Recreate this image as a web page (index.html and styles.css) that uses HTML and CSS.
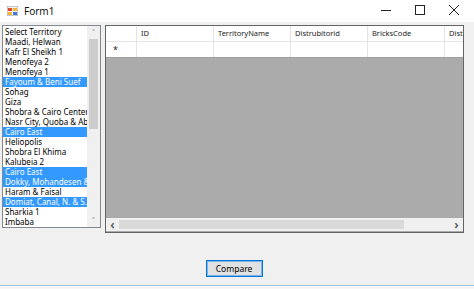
FILE: index.html
```html
<!DOCTYPE html>
<html lang="en">
<head>
    <meta charset="UTF-8">
    <title>Form1</title>
    <link rel="stylesheet" href="styles.css">
</head>
<body>
    <div class="window">
        <div class="titlebar">
            <svg class="app-icon" width="11" height="10" viewBox="0 0 11 10">
                <rect x="0" y="0" width="11" height="10" fill="#f4f4f4" stroke="#9a9a9a" stroke-width="1"/>
                <rect x="1" y="2" width="4" height="3" fill="#e8412c"/>
                <rect x="6" y="2" width="4" height="3" fill="#f7b52c"/>
                <rect x="1" y="6" width="4" height="3" fill="#f7b52c"/>
                <rect x="6" y="6" width="4" height="3" fill="#3b7ddd"/>
            </svg>
            <span class="title">Form1</span>
            <div class="controls">
                <svg class="ctl" width="34" height="22" viewBox="0 0 34 22"><line x1="12" y1="10.5" x2="22" y2="10.5" stroke="#222" stroke-width="1"/></svg>
                <svg class="ctl" width="34" height="22" viewBox="0 0 34 22"><rect x="12.5" y="5.5" width="9" height="9" fill="none" stroke="#222" stroke-width="1"/></svg>
                <svg class="ctl" width="34" height="22" viewBox="0 0 34 22"><path d="M12 5 L22 15 M22 5 L12 15" stroke="#222" stroke-width="1"/></svg>
            </div>
        </div>

        <div class="client">
            <div class="listbox">
                <ul class="items">
                    <li>Select Territory</li>
                    <li>Maadi, Helwan</li>
                    <li>Kafr El Sheikh 1</li>
                    <li>Menofeya 2</li>
                    <li>Menofeya 1</li>
                    <li class="sel">Fayoum &amp; Beni Suef</li>
                    <li>Sohag</li>
                    <li>Giza</li>
                    <li>Shobra &amp; Cairo Center</li>
                    <li>Nasr City, Quoba &amp; Ab</li>
                    <li class="sel">Cairo East</li>
                    <li>Heliopolis</li>
                    <li>Shobra El Khima</li>
                    <li>Kalubeia 2</li>
                    <li class="sel">Cairo East</li>
                    <li class="sel">Dokky, Mohandesen &amp;</li>
                    <li>Haram &amp; Faisal</li>
                    <li class="sel">Domiat, Canal, N. &amp; S.</li>
                    <li>Sharkia 1</li>
                    <li>Imbaba</li>
                </ul>
                <div class="vscroll">
                    <span class="arrow">&#708;</span>
                    <div class="vthumb"></div>
                    <div class="vtrack"></div>
                    <span class="arrow">&#709;</span>
                </div>
            </div>

            <div class="grid">
                <div class="grid-body">
                    <div class="row head">
                        <div class="cell rowhead"></div>
                        <div class="cell">ID</div>
                        <div class="cell">TerritoryName</div>
                        <div class="cell">Distrubitorid</div>
                        <div class="cell">BricksCode</div>
                        <div class="cell">Distr</div>
                    </div>
                    <div class="row newrow">
                        <div class="cell rowhead">*</div>
                        <div class="cell"></div>
                        <div class="cell"></div>
                        <div class="cell"></div>
                        <div class="cell"></div>
                        <div class="cell"></div>
                    </div>
                </div>
                <div class="hscroll">
                    <span class="arrow">&lsaquo;</span>
                    <div class="hthumb"></div>
                    <div class="htrack"></div>
                    <span class="arrow">&rsaquo;</span>
                </div>
            </div>
        </div>

        <div class="footer">
            <button class="btn">Compare</button>
        </div>
        <div class="bottom-edge"></div>
    </div>
</body>
</html>
```

FILE: styles.css
```css
body {
    margin: 0;
    padding: 0;
    font-family: "Noto Sans", "DejaVu Sans", sans-serif;
    color: #000;
}

.window {
    width: 474px;
    height: 289px;
    background-color: #f0f0f0;
    display: flex;
    flex-direction: column;
    overflow: hidden;
}

/* barra de titulo */
.titlebar {
    height: 22px;
    background-color: #fff;
    display: flex;
    align-items: center;
    flex-shrink: 0;
}

.app-icon {
    margin-left: 7px;
    margin-right: 6px;
}

.title {
    font-size: 10px;
    color: #111;
}

.controls {
    margin-left: auto;
    margin-right: 3px;
    display: flex;
}

.ctl {
    display: block;
}

.client {
    display: flex;
    align-items: flex-start;
    padding: 3px 0 0 2px;
    gap: 4px;
}

/* lista */
.listbox {
    width: 97px;
    height: 201px;
    border: 1px solid #828790;
    background-color: #fff;
    display: flex;
}

.items {
    list-style: none;
    margin: 0;
    padding: 1px 0 0 0;
    flex: 1;
    overflow: hidden;
    font-size: 8px;
}

.items li {
    height: 10px;
    line-height: 10px;
    padding-left: 2px;
    white-space: nowrap;
    overflow: hidden;
}

.items li.sel {
    background-color: #3399ff;
    color: #fff;
}

.vscroll {
    width: 13px;
    background-color: #f0f0f0;
    display: flex;
    flex-direction: column;
    align-items: center;
}

.vscroll .arrow {
    height: 13px;
    line-height: 13px;
    font-size: 9px;
    color: #606060;
}

.vthumb {
    width: 9px;
    height: 90px;
    background-color: #cdcdcd;
}

.vtrack {
    flex: 1;
}

/* grade */
.grid {
    width: 357px;
    height: 206px;
    border: 1px solid #646464;
    background-color: #ababab;
    display: flex;
    flex-direction: column;
    overflow: hidden;
}

.grid-body {
    flex: 1;
    overflow: hidden;
}

.row {
    display: flex;
    height: 15px;
    background-color: #fff;
    border-bottom: 1px solid #e3e3e3;
    width: max-content;
}

.cell {
    flex-shrink: 0;
    border-right: 1px solid #e3e3e3;
    font-size: 7.5px;
    line-height: 15px;
    padding-left: 4px;
    box-sizing: border-box;
    width: 77px;
    color: #222;
}

.cell.rowhead {
    width: 31px;
    padding-left: 7px;
    font-size: 9px;
}

.newrow {
    border-bottom: 1px solid #a0a0a0;
}

.hscroll {
    height: 13px;
    background-color: #f0f0f0;
    display: flex;
    align-items: center;
    margin-bottom: 1px;
}

.hscroll .arrow {
    width: 13px;
    text-align: center;
    font-size: 12px;
    font-weight: bold;
    line-height: 13px;
    color: #606060;
}

.hthumb {
    width: 285px;
    height: 9px;
    background-color: #dadada;
}

.htrack {
    flex: 1;
}

/* botao */
.footer {
    display: flex;
    justify-content: center;
    padding: 27px 0 0 0;
    margin-left: -6px;
}

.btn {
    width: 57px;
    height: 17px;
    background-color: #e1e1e1;
    border: 1px solid #0078d7;
    box-shadow: inset 0 0 0 1px #7eb4ea;
    font-family: "Noto Sans", sans-serif;
    font-size: 8.5px;
    padding: 0;
    color: #000;
}

.bottom-edge {
    margin-top: auto;
    height: 3px;
    border-top: 1px solid #a9c2dc;
    background-color: #f7f7f7;
}
```
